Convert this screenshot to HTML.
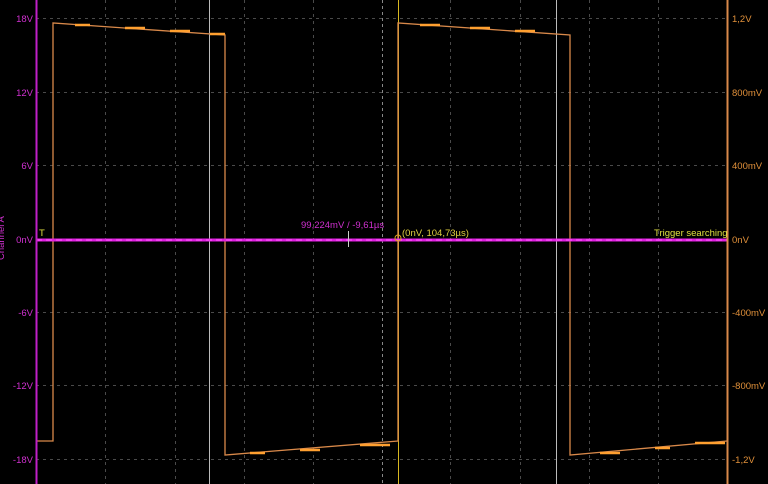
<!DOCTYPE html>
<html><head><style>
html,body{margin:0;padding:0;background:#000;width:768px;height:484px;overflow:hidden}
svg{display:block}
text{font-family:"Liberation Sans",sans-serif;font-size:9.5px}
</style></head><body>
<svg width="768" height="484" viewBox="0 0 768 484" xmlns="http://www.w3.org/2000/svg">
<rect width="768" height="484" fill="#000"/>
<g stroke="#4a4a4a" stroke-width="1" stroke-dasharray="3,4">
<line x1="105.5" y1="0" x2="105.5" y2="484"/><line x1="175.5" y1="0" x2="175.5" y2="484"/>
<line x1="244.5" y1="0" x2="244.5" y2="484"/><line x1="313.5" y1="0" x2="313.5" y2="484"/>
<line x1="450.5" y1="0" x2="450.5" y2="484"/><line x1="520.5" y1="0" x2="520.5" y2="484"/>
<line x1="589.5" y1="0" x2="589.5" y2="484"/><line x1="658.5" y1="0" x2="658.5" y2="484"/>
<line x1="36" y1="18.5" x2="727" y2="18.5"/><line x1="36" y1="92.5" x2="727" y2="92.5"/>
<line x1="36" y1="165.5" x2="727" y2="165.5"/><line x1="36" y1="312.5" x2="727" y2="312.5"/>
<line x1="36" y1="385.5" x2="727" y2="385.5"/><line x1="36" y1="459.5" x2="727" y2="459.5"/>
</g>
<line x1="382.5" y1="0" x2="382.5" y2="484" stroke="#888" stroke-dasharray="3,3"/>
<line x1="209.5" y1="0" x2="209.5" y2="484" stroke="#bbb"/>
<line x1="556.5" y1="0" x2="556.5" y2="484" stroke="#bbb"/>
<line x1="398.5" y1="0" x2="398.5" y2="484" stroke="#d8b820"/>
<polyline fill="none" stroke="#d9894a" stroke-width="1.3" points="37,441 53,441 53,23 225,35 225,455 398,441 398,23 570,35 570,455 727,441"/>
<g stroke="#ffa030" stroke-width="2.5">
<line x1="75" y1="25" x2="90" y2="25"/><line x1="125" y1="28" x2="145" y2="28"/><line x1="170" y1="31" x2="190" y2="31"/><line x1="210" y1="34" x2="225" y2="34"/>
<line x1="420" y1="25" x2="440" y2="25"/><line x1="470" y1="28" x2="490" y2="28"/><line x1="515" y1="31" x2="535" y2="31"/>
<line x1="250" y1="453" x2="265" y2="453"/><line x1="300" y1="450" x2="320" y2="450"/><line x1="360" y1="445" x2="390" y2="445"/>
<line x1="600" y1="453" x2="620" y2="453"/><line x1="655" y1="448" x2="670" y2="448"/><line x1="695" y1="443" x2="725" y2="443"/>
</g>
<line x1="36" y1="240" x2="727" y2="240" stroke="#e020e0" stroke-width="3"/>
<line x1="36" y1="240" x2="727" y2="240" stroke="#ff60ff" stroke-width="1" stroke-dasharray="6,4"/>
<line x1="36.5" y1="0" x2="36.5" y2="484" stroke="#c020c8" stroke-width="2"/>
<line x1="727.5" y1="0" x2="727.5" y2="484" stroke="#d9894a" stroke-width="2"/>
<line x1="348.5" y1="231" x2="348.5" y2="247" stroke="#ccc"/>
<circle cx="398" cy="238" r="3" fill="none" stroke="#e0a020"/>
<g fill="#d030d0" text-anchor="end">
<text x="33" y="22">18V</text><text x="33" y="96">12V</text><text x="33" y="169">6V</text>
<text x="33" y="243">0nV</text><text x="33" y="316">-6V</text><text x="33" y="389">-12V</text><text x="33" y="463">-18V</text>
</g>
<text x="4" y="260" fill="#d030d0" transform="rotate(-90 4 260)">Channel A</text>
<g fill="#e0903a">
<text x="732" y="22">1,2V</text><text x="732" y="96">800mV</text><text x="732" y="169">400mV</text>
<text x="732" y="243">0nV</text><text x="732" y="316">-400mV</text><text x="732" y="389">-800mV</text><text x="732" y="463">-1,2V</text>
</g>
<text x="39" y="236" fill="#e0e040" font-size="8">T</text>
<text x="301" y="228" fill="#d030d0">99,224mV / -9,61µs</text>
<text x="402" y="236" fill="#e0d040">(0nV, 104,73µs)</text>
<text x="654" y="236" fill="#e0e040">Trigger searching</text>
</svg>
</body></html>
